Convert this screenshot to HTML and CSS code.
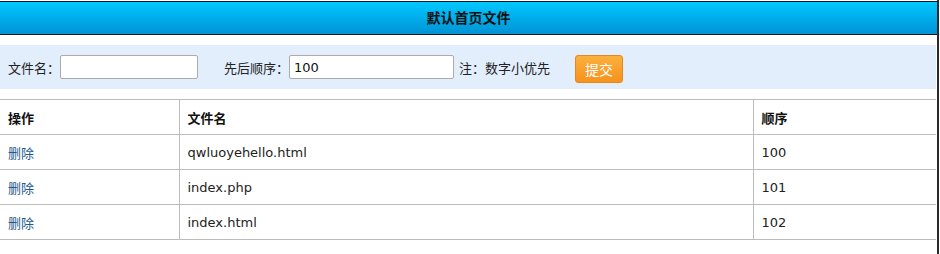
FILE: index.html
```html
<!DOCTYPE html>
<html lang="zh-CN">
  <head>
    <meta charset="UTF-8" />
    <meta name="viewport" content="width=device-width, initial-scale=1.0" />
    <title>默认首页文件</title>
    <link rel="stylesheet" href="styles.css">
  </head>
  <body>
    <div class="page">
      <div class="title-bar">默认首页文件</div>

      <form class="add-form" onsubmit="return false">
        <label class="field">文件名：<input type="text" class="txt txt-name" /></label>
        <label class="field">先后顺序：<input type="text" class="txt txt-order" value="100" /></label>
        <span class="note">注：数字小优先</span>
        <button type="submit" class="btn-submit">提交</button>
      </form>

      <table class="file-table">
        <thead>
          <tr>
            <th class="col-op">操作</th>
            <th class="col-name">文件名</th>
            <th class="col-order">顺序</th>
          </tr>
        </thead>
        <tbody>
          <tr>
            <td><a href="#">删除</a></td>
            <td>qwluoyehello.html</td>
            <td>100</td>
          </tr>
          <tr>
            <td><a href="#">删除</a></td>
            <td>index.php</td>
            <td>101</td>
          </tr>
          <tr>
            <td><a href="#">删除</a></td>
            <td>index.html</td>
            <td>102</td>
          </tr>
        </tbody>
      </table>
    </div>
  </body>
</html>
```

FILE: styles.css
```css
* {
  margin: 0;
  padding: 0;
  box-sizing: border-box;
}

body {
  font-family: "DejaVu Sans", Verdana, "Noto Sans CJK SC", sans-serif;
  font-size: 13px;
  color: #222;
  background: #fff;
}

.page {
  width: 939px;
  min-height: 254px;
  border-right: 2px solid #2a2a2a;
  padding-top: 1px;
}

.title-bar {
  height: 34px;
  border-top: 1px solid #1a1a1a;
  border-bottom: 1px solid #1a1a1a;
  background: linear-gradient(to bottom, #00c8ff 0%, #0093d4 100%);
  color: #111;
  font-weight: bold;
  font-size: 14px;
  line-height: 32px;
  text-align: center;
}

.add-form {
  display: flex;
  align-items: center;
  height: 44px;
  margin: 10px 1px 0 0;
  padding-left: 8px;
  background: #e2eefc;
  color: #222;
}

.field {
  display: flex;
  align-items: center;
}

.field + .field {
  margin-left: 26px;
}

.txt {
  height: 24px;
  border: 1px solid #ababab;
  border-radius: 2px;
  padding: 0 4px;
  font-family: inherit;
  font-size: 13px;
  color: #111;
  background: #fff;
}

.txt-name {
  width: 138px;
}

.txt-order {
  width: 165px;
}

.note {
  margin-left: 5px;
}

.btn-submit {
  width: 48px;
  height: 28px;
  margin: 3px 0 0 25px;
  border: 1px solid #e1891a;
  border-radius: 3px;
  background: linear-gradient(to bottom, #fbb03c 0%, #f7921c 100%);
  color: #fff;
  font-family: inherit;
  font-size: 14px;
  cursor: pointer;
}

.file-table {
  width: 936px;
  margin-top: 10px;
  border-collapse: collapse;
}

.file-table th,
.file-table td {
  height: 35px;
  padding: 0 8px;
  border: 1px solid #bcbcbc;
  text-align: left;
  vertical-align: middle;
}

.file-table tr > :first-child {
  border-left: none;
}

.file-table tr > :last-child {
  border-right: none;
}

.file-table th {
  font-weight: bold;
  color: #111;
}

.col-op {
  width: 179px;
}

.col-order {
  width: 183px;
}

.file-table a {
  color: #1f5a8c;
  text-decoration: none;
}
```
